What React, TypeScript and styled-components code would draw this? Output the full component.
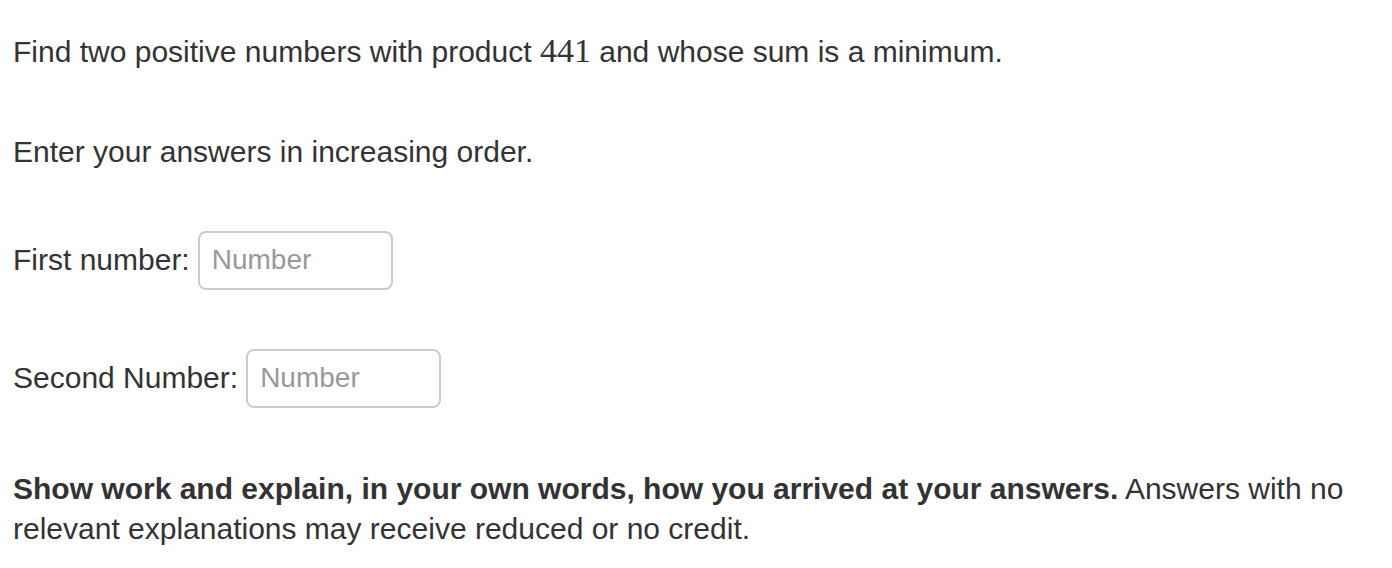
import React from "react";
import styled, { createGlobalStyle } from "styled-components";

const GlobalStyle = createGlobalStyle`
  body {
    margin: 0;
    background: #ffffff;
    font-family: "Liberation Sans", Arial, Helvetica, sans-serif;
    color: #333333;
  }
`;

const Page = styled.div`
  display: flex;
  flex-direction: column;
  gap: 60px;
  padding: 32px 13px 0 13px;
  font-size: 30px;
  line-height: 40px;
`;

const Paragraph = styled.p<{ $extraTop?: number }>`
  margin: 0;
  margin-top: ${({ $extraTop }) => ($extraTop ? `${$extraTop}px` : "0")};
  max-width: 1360px;
`;

const MathNum = styled.span`
  font-family: "Liberation Serif", "Times New Roman", serif;
  font-size: 34px;
  line-height: 0;
`;

const FieldRow = styled.label<{ $extraTop?: number }>`
  display: flex;
  align-items: center;
  gap: 8px;
  height: 58px;
  margin-top: ${({ $extraTop }) => ($extraTop ? `${$extraTop}px` : "0")};
`;

const NumberInput = styled.input`
  box-sizing: border-box;
  width: 195px;
  height: 59px;
  padding: 0 12px;
  border: 2px solid #cccccc;
  border-radius: 8px;
  font-family: "Liberation Sans", Arial, Helvetica, sans-serif;
  font-size: 28px;
  color: #333333;
  background: #ffffff;
  outline: none;

  &::placeholder {
    color: #999999;
  }
`;

const App = () => {
  return (
    <>
      <GlobalStyle />
      <Page>
        <Paragraph>
          Find two positive numbers with product <MathNum>441</MathNum> and whose sum is a minimum.
        </Paragraph>
        <Paragraph>Enter your answers in increasing order.</Paragraph>
        <FieldRow $extraTop={-1}>
          First number: <NumberInput type="text" placeholder="Number" />
        </FieldRow>
        <FieldRow>
          Second Number: <NumberInput type="text" placeholder="Number" />
        </FieldRow>
        <Paragraph $extraTop={2}>
          <b>Show work and explain, in your own words, how you arrived at your answers.</b> Answers with no
          relevant explanations may receive reduced or no credit.
        </Paragraph>
      </Page>
    </>
  );
};

export default App;
